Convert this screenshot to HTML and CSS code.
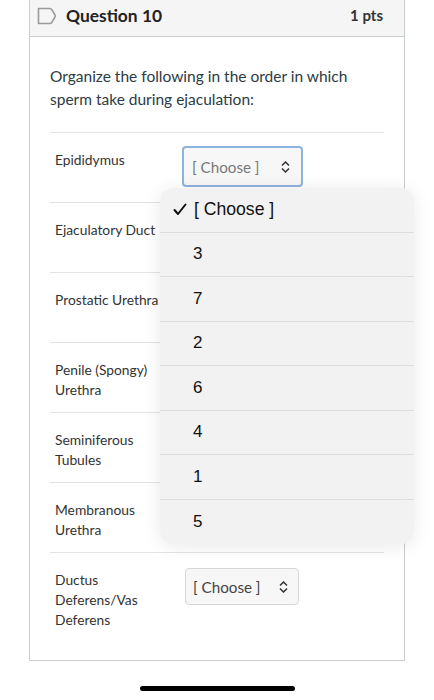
FILE: index.html
```html
<!DOCTYPE html>
<html lang="en">
<head>
<meta charset="utf-8">
<title>Question 10</title>
<link rel="stylesheet" href="styles.css">
</head>
<body>
<div class="page">
  <div class="card">
    <div class="card-header">
      <svg class="flag" width="20" height="18" viewBox="0 0 20 18"><path d="M1.5 1.5 H12.5 Q14 1.5 15 2.8 L18 8 Q18.6 9 18 10 L15 15.2 Q14 16.5 12.5 16.5 H1.5 Z" fill="none" stroke="#9a9a9a" stroke-width="1.6" stroke-linejoin="round"/></svg>
      <span class="title">Question 10</span>
      <span class="pts">1 pts</span>
    </div>
    <div class="card-body">
      <p class="prompt">Organize the following in the order in which sperm take during ejaculation:</p>
      <div class="rows">
        <div class="row">
          <div class="label">Epididymus</div>
          <div class="select focused"><span>[ Choose ]</span><svg class="arrows" width="9" height="12" viewBox="0 0 9 12"><path d="M1 4.5 L4.5 1 L8 4.5 M1 7.5 L4.5 11 L8 7.5" fill="none" stroke="#333" stroke-width="1.5"/></svg></div>
        </div>
        <div class="row"><div class="label">Ejaculatory Duct</div></div>
        <div class="row"><div class="label">Prostatic Urethra</div></div>
        <div class="row"><div class="label">Penile (Spongy) Urethra</div></div>
        <div class="row"><div class="label">Seminiferous Tubules</div></div>
        <div class="row"><div class="label">Membranous Urethra</div></div>
        <div class="row last">
          <div class="label">Ductus Deferens/Vas Deferens</div>
          <div class="select"><span>[ Choose ]</span><svg class="arrows" width="9" height="12" viewBox="0 0 9 12"><path d="M1 4.5 L4.5 1 L8 4.5 M1 7.5 L4.5 11 L8 7.5" fill="none" stroke="#333" stroke-width="1.5"/></svg></div>
        </div>
      </div>
    </div>
  </div>
  <ul class="menu">
    <li class="checked"><svg class="check" width="14" height="13" viewBox="0 0 14 13"><path d="M1.5 7 L5 11 L12.5 1.5" fill="none" stroke="#111" stroke-width="2" stroke-linecap="round" stroke-linejoin="round"/></svg>[ Choose ]</li>
    <li>3</li>
    <li>7</li>
    <li>2</li>
    <li>6</li>
    <li>4</li>
    <li>1</li>
    <li>5</li>
  </ul>
  <div class="home-bar"></div>
</div>
</body>
</html>
```

FILE: styles.css
```css
html, body {
  margin: 0;
  padding: 0;
  background: #ffffff;
}
.page {
  position: relative;
  width: 434px;
  height: 700px;
  overflow: hidden;
  font-family: Lato, "Open Sans", sans-serif;
  color: #2d3b45;
}
.card {
  margin-left: 29px;
  width: 374px;
  border: 1px solid #c7cdd1;
  border-top: none;
  height: 660px;
  box-sizing: content-box;
}
.card-header {
  height: 36px;
  background: #f5f5f5;
  border-bottom: 1px solid #c7cdd1;
  display: flex;
  align-items: center;
  padding: 0 21px 0 7px;
}
.flag {
  display: block;
  margin-right: 9px;
  margin-top: -4px;
}
.title {
  font-weight: 700;
  font-size: 17.4px;
  color: #222;
  flex: 1;
  margin-top: -6px;
}
.pts {
  font-weight: 700;
  font-size: 15px;
  color: #333;
  margin-top: -6px;
}
.card-body {
  padding: 0 20px;
}
.prompt {
  margin: 0;
  padding: 28px 0 21px;
  font-size: 15.5px;
  line-height: 23px;
  color: #2d3b45;
}
.rows {
  display: flex;
  flex-direction: column;
}
.row {
  height: 69px;
  border-top: 1px solid #e3e3e3;
  display: flex;
  align-items: flex-start;
}
.label {
  width: 112px;
  padding: 17px 0 0 5px;
  font-size: 13.8px;
  line-height: 20px;
  color: #333;
}
.select {
  margin-top: 15px;
  margin-left: 18px;
  width: 114px;
  height: 37px;
  box-sizing: border-box;
  border: 1px solid #d7d7d7;
  border-radius: 4px;
  background: #f7f7f7;
  display: flex;
  align-items: center;
  justify-content: space-between;
  padding: 0 10px 0 7px;
  font-size: 15.2px;
  color: #444;
}
.select.focused {
  margin-top: 13px;
  margin-left: 15px;
  width: 121px;
  height: 41px;
  border: 2px solid #8db3e0;
  padding: 0 11px 0 8px;
  color: #777;
}
.arrows {
  display: block;
}
.menu {
  position: absolute;
  left: 160px;
  top: 188px;
  width: 254px;
  margin: 0;
  padding: 0;
  list-style: none;
  background: rgba(242, 242, 242, 0.98);
  border-radius: 13px;
  box-shadow: 0 2px 18px rgba(0, 0, 0, 0.09);
  overflow: hidden;
  font-family: "Liberation Sans", Arial, sans-serif;
  font-size: 17px;
  color: #111;
}
.menu li {
  height: 44.5px;
  box-sizing: border-box;
  display: flex;
  align-items: center;
  padding-left: 33px;
  border-bottom: 1px solid #dedede;
}
.menu li:last-child {
  border-bottom: none;
}
.menu li.checked {
  padding-left: 13px;
  font-size: 17.6px;
}
.check {
  display: block;
  margin-right: 7px;
}
.home-bar {
  position: absolute;
  left: 140px;
  top: 686px;
  width: 155px;
  height: 5px;
  border-radius: 3px;
  background: #000;
}
```
